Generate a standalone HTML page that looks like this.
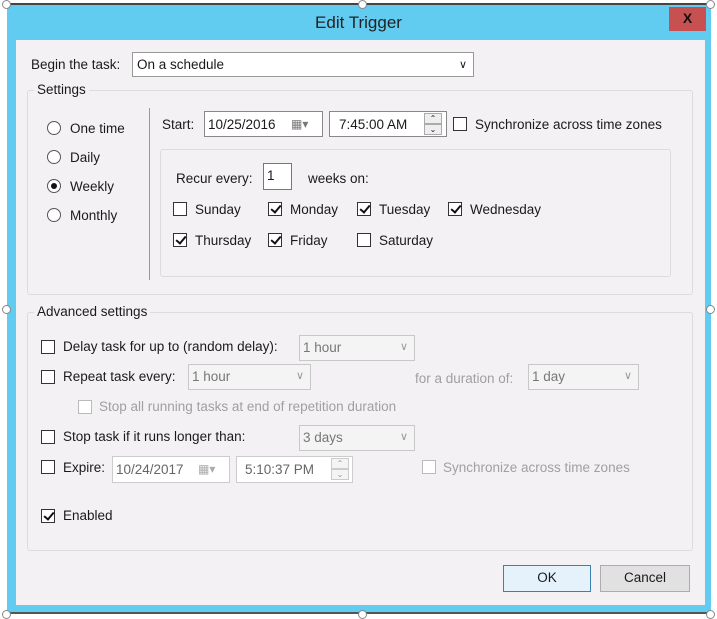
<!DOCTYPE html>
<html><head><meta charset="utf-8"><style>
*{box-sizing:border-box;margin:0;padding:0}
body{width:717px;height:619px;background:#fff;position:relative;overflow:hidden;font-family:"Liberation Sans",sans-serif;font-size:13.5px;color:#1a1a1a}
.a{position:absolute}
.t{position:absolute;white-space:nowrap;line-height:16px}
.g{color:#a0a0a0}
.cb{position:absolute;width:14px;height:14px;border:1px solid #333;background:#fff}
.cb.d{border-color:#bbb}
.cb.c::after{content:"";position:absolute;left:3.5px;top:0px;width:4px;height:8px;border:solid #111;border-width:0 2px 2px 0;transform:rotate(40deg)}
.rd{position:absolute;width:14px;height:14px;border:1px solid #555;border-radius:50%;background:#fff}
.rd.c::after{content:"";position:absolute;left:3px;top:3px;width:6px;height:6px;border-radius:50%;background:#111}
.box{position:absolute;border:1px solid #a8a8a8;background:#fff}
.combo{position:absolute;border:1px solid #c8c8c8;background:#f4f4f4;color:#777}
.combo span{position:absolute;left:3px;top:4px}
.combo i{position:absolute;right:6px;top:4px;font-style:normal;font-size:11px;color:#999}
.grp{position:absolute;border:1px solid #dcdcdc;border-radius:3px}
.leg{position:absolute;background:#f4f1f4;padding:0 3px;white-space:nowrap}
.btn{position:absolute;border:1px solid #acacac;background:#e1e1e1;text-align:center;line-height:24px}
.h{position:absolute;width:9px;height:9px;border:1px solid #888;border-radius:50%;background:#fff}
</style></head><body>
<div class="a" style="left:7px;top:3px;width:704px;height:2px;background:#444"></div>
<div class="a" style="left:7px;top:5px;width:704px;height:608px;background:#62cbf0"></div>
<div class="a" style="left:16px;top:40px;width:689px;height:565px;background:#f4f1f4"></div>
<div class="a" style="left:7px;top:612px;width:704px;height:2px;background:#555"></div>
<div class="t" style="left:0;width:717px;text-align:center;top:13px;font-size:17px;line-height:20px;color:#222">Edit Trigger</div>
<div class="a" style="left:669px;top:7px;width:37px;height:24px;background:#c75050;text-align:center;font-weight:bold;font-size:14px;line-height:22px;color:#111">X</div>

<div class="h" style="left:2px;top:0px"></div><div class="h" style="left:358px;top:0px"></div><div class="h" style="left:706px;top:0px"></div>
<div class="h" style="left:2px;top:305px"></div><div class="h" style="left:706px;top:305px"></div>
<div class="h" style="left:2px;top:610px"></div><div class="h" style="left:358px;top:610px"></div><div class="h" style="left:706px;top:610px"></div>

<div class="t" style="left:31px;top:57px">Begin the task:</div>
<div class="box" style="left:132px;top:52px;width:342px;height:25px;border-color:#999"><span class="t" style="left:4px;top:4px">On a schedule</span><span class="t" style="right:6px;top:4px;font-size:11px">&#8744;</span></div>

<div class="grp" style="left:27px;top:90px;width:666px;height:205px"></div>
<div class="leg" style="left:34px;top:82px">Settings</div>
<div class="a" style="left:149px;top:108px;width:1px;height:172px;background:#999"></div>
<div class="rd" style="left:47px;top:121px"></div><div class="t" style="left:70px;top:121px">One time</div>
<div class="rd" style="left:47px;top:150px"></div><div class="t" style="left:70px;top:150px">Daily</div>
<div class="rd c" style="left:47px;top:179px"></div><div class="t" style="left:70px;top:179px">Weekly</div>
<div class="rd" style="left:47px;top:208px"></div><div class="t" style="left:70px;top:208px">Monthly</div>

<div class="t" style="left:162px;top:117px">Start:</div>
<div class="box" style="left:204px;top:111px;width:119px;height:26px;border-color:#888"><span class="t" style="left:3px;top:5px">10/25/2016</span><span class="t" style="left:86px;top:4px;color:#777;font-size:12px">&#9638;&#9662;</span></div>
<div class="box" style="left:329px;top:111px;width:118px;height:26px;border-color:#888"><span class="t" style="left:9px;top:5px">7:45:00 AM</span>
<div class="a" style="left:94px;top:1px;width:18px;height:11px;border:1px solid #aaa;background:#eee;font-size:8px;text-align:center;line-height:9px">&#8963;</div>
<div class="a" style="left:94px;top:12px;width:18px;height:11px;border:1px solid #aaa;background:#eee;font-size:8px;text-align:center;line-height:9px">&#8964;</div></div>
<div class="cb" style="left:453px;top:117px"></div><div class="t" style="left:475px;top:117px">Synchronize across time zones</div>

<div class="grp" style="left:160px;top:149px;width:511px;height:128px"></div>
<div class="t" style="left:176px;top:171px">Recur every:</div>
<div class="box" style="left:263px;top:163px;width:29px;height:27px;border-color:#777"><span class="t" style="left:3px;top:4px">1</span></div>
<div class="t" style="left:308px;top:171px">weeks on:</div>
<div class="cb" style="left:173px;top:202px"></div><div class="t" style="left:195px;top:202px">Sunday</div>
<div class="cb c" style="left:268px;top:202px"></div><div class="t" style="left:290px;top:202px">Monday</div>
<div class="cb c" style="left:357px;top:202px"></div><div class="t" style="left:379px;top:202px">Tuesday</div>
<div class="cb c" style="left:448px;top:202px"></div><div class="t" style="left:470px;top:202px">Wednesday</div>
<div class="cb c" style="left:173px;top:233px"></div><div class="t" style="left:195px;top:233px">Thursday</div>
<div class="cb c" style="left:268px;top:233px"></div><div class="t" style="left:290px;top:233px">Friday</div>
<div class="cb" style="left:357px;top:233px"></div><div class="t" style="left:379px;top:233px">Saturday</div>

<div class="grp" style="left:27px;top:312px;width:666px;height:239px"></div>
<div class="leg" style="left:34px;top:304px">Advanced settings</div>

<div class="cb" style="left:41px;top:340px"></div><div class="t" style="left:63px;top:339px">Delay task for up to (random delay):</div>
<div class="combo" style="left:299px;top:335px;width:116px;height:26px"><span>1 hour</span><i>&#8744;</i></div>
<div class="cb" style="left:41px;top:370px"></div><div class="t" style="left:63px;top:369px">Repeat task every:</div>
<div class="combo" style="left:188px;top:364px;width:123px;height:26px"><span>1 hour</span><i>&#8744;</i></div>
<div class="t g" style="left:415px;top:371px">for a duration of:</div>
<div class="combo" style="left:528px;top:364px;width:111px;height:26px"><span>1 day</span><i>&#8744;</i></div>
<div class="cb d" style="left:78px;top:400px"></div><div class="t g" style="left:99px;top:399px">Stop all running tasks at end of repetition duration</div>
<div class="cb" style="left:41px;top:430px"></div><div class="t" style="left:63px;top:429px">Stop task if it runs longer than:</div>
<div class="combo" style="left:299px;top:425px;width:116px;height:26px"><span>3 days</span><i>&#8744;</i></div>
<div class="cb" style="left:41px;top:460px"></div><div class="t" style="left:63px;top:460px">Expire:</div>
<div class="box" style="left:112px;top:456px;width:118px;height:27px;border-color:#ccc;color:#666"><span class="t" style="left:3px;top:5px">10/24/2017</span><span class="t" style="left:85px;top:4px;color:#aaa;font-size:12px">&#9638;&#9662;</span></div>
<div class="box" style="left:236px;top:456px;width:117px;height:27px;border-color:#ccc;color:#666"><span class="t" style="left:8px;top:5px">5:10:37 PM</span>
<div class="a" style="left:94px;top:1px;width:18px;height:11px;border:1px solid #ccc;background:#f4f4f4;font-size:8px;text-align:center;line-height:9px;color:#999">&#8963;</div>
<div class="a" style="left:94px;top:12px;width:18px;height:11px;border:1px solid #ccc;background:#f4f4f4;font-size:8px;text-align:center;line-height:9px;color:#999">&#8964;</div></div>
<div class="cb d" style="left:422px;top:460px"></div><div class="t g" style="left:443px;top:460px">Synchronize across time zones</div>
<div class="cb c" style="left:41px;top:509px"></div><div class="t" style="left:63px;top:508px">Enabled</div>

<div class="btn" style="left:503px;top:565px;width:88px;height:27px;border-color:#3c7fb1;background:#e5f1fb">OK</div>
<div class="btn" style="left:600px;top:565px;width:90px;height:27px">Cancel</div>
</body></html>
